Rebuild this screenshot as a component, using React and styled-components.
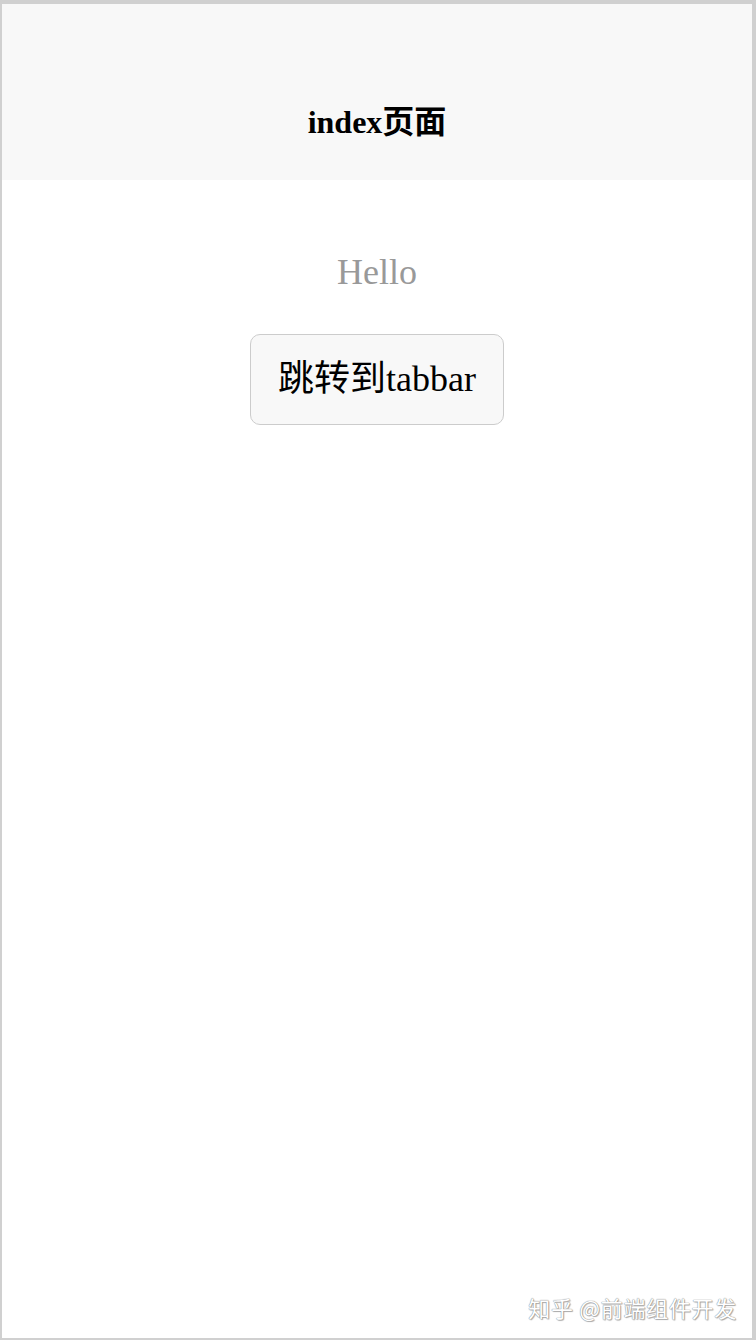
import React from 'react';
import styled, { createGlobalStyle } from 'styled-components';

const GlobalStyle = createGlobalStyle`
    html, body {
        margin: 0;
        padding: 0;
        background: #ffffff;
    }
    * {
        box-sizing: border-box;
    }
`;

const serif = `"Liberation Serif", "Noto Sans CJK SC", serif`;

const Frame = styled.div`
    position: relative;
    width: 756px;
    height: 1340px;
    border-style: solid;
    border-color: #d0d0d0;
    border-width: 4px 4px 2px 2px;
    background: #ffffff;
    display: flex;
    flex-direction: column;
    overflow: hidden;
`;

const NavBar = styled.header`
    height: 176px;
    padding-top: 98px;
    background: #f8f8f8;
    display: flex;
    justify-content: center;
`;

const NavTitle = styled.h1`
    margin: 0;
    font-family: ${serif};
    font-size: 32px;
    line-height: 40px;
    font-weight: 700;
    color: #000000;
`;

const Content = styled.main`
    display: flex;
    flex-direction: column;
    align-items: center;
    padding-top: 68px;
    gap: 38px;
`;

const Greeting = styled.p`
    margin: 0;
    font-family: ${serif};
    font-size: 36px;
    line-height: 48px;
    color: #999999;
`;

const NavButton = styled.button`
    font-family: ${serif};
    font-size: 36px;
    line-height: 43px;
    color: #000000;
    background: #f8f8f8;
    border: 1px solid #cccccc;
    border-radius: 10px;
    padding: 23px 27px;
    cursor: pointer;
`;

const Watermark = styled.span`
    position: absolute;
    right: 15px;
    bottom: 16px;
    font-family: "Noto Sans CJK SC", "Noto Sans", sans-serif;
    font-size: 22px;
    line-height: 30px;
    color: #ffffff;
    text-shadow: 0 0 1px #8a8a8a, 0 0 1px #8a8a8a, 1px 1px 1px #b0b0b0;
    letter-spacing: 0.7px;
`;

const App = () => {
    return (
        <>
            <GlobalStyle />
            <Frame>
                <NavBar>
                    <NavTitle>index页面</NavTitle>
                </NavBar>
                <Content>
                    <Greeting>Hello</Greeting>
                    <NavButton type="button">跳转到tabbar</NavButton>
                </Content>
                <Watermark>知乎 @前端组件开发</Watermark>
            </Frame>
        </>
    );
};

export default App;
